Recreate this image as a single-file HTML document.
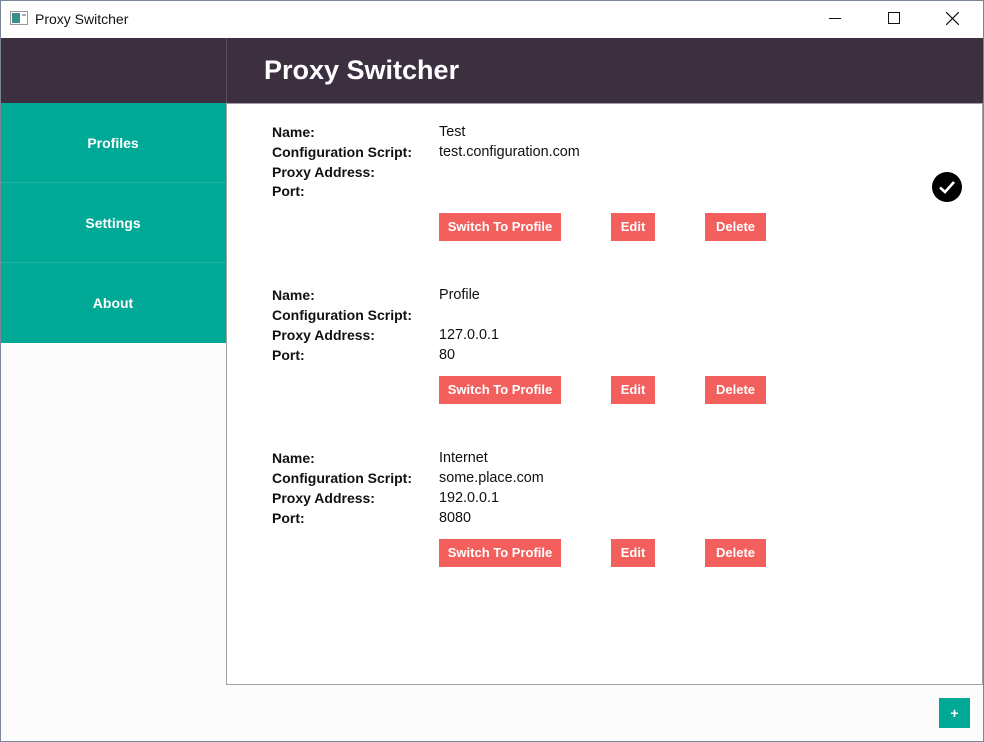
<!DOCTYPE html>
<html><head><style>
*{margin:0;padding:0;box-sizing:border-box}
body{width:984px;height:742px;position:relative;overflow:hidden;font-family:"Liberation Sans",sans-serif;background:#fcfcfc}
.abs{position:absolute}
.frame{left:0;top:0;width:984px;height:742px;border:1px solid #7a8599;z-index:10;pointer-events:none}
.title{left:0;top:0;width:984px;height:38px;background:#fff}
.hdr{left:0;top:38px;width:984px;height:65px;background:#3c2f40}
.side{left:0;top:103px;width:226px;height:240px;background:#00a896}
.item{position:absolute;left:0;width:226px;height:80px;line-height:80px;text-align:center;color:#fff;font-weight:bold;font-size:14px;border-bottom:1px solid #1fb3a3}
.panel{left:226px;top:103px;width:757px;height:582px;background:#fff;border:1px solid #a0a0a0}
.lbl{position:absolute;left:272px;font-size:14px;font-weight:bold;color:#111}
.val{position:absolute;left:439px;font-size:14.4px;color:#111}
.btn{position:absolute;height:28px;line-height:28px;background:#f25f5c;color:#fff;font-weight:bold;font-size:13px;text-align:center}
</style></head><body>
<div class="abs frame"></div>
<div class="abs title">
<svg class="abs" style="left:10px;top:11px" width="18" height="14"><rect x="0.5" y="0.5" width="17" height="13" fill="#fff" stroke="#999"/><rect x="2" y="2" width="8" height="10" fill="#3a8f8a"/><rect x="12" y="3" width="4" height="2" fill="#aaa"/></svg>
<div class="abs" style="left:35px;top:11px;font-size:14px;color:#111">Proxy Switcher</div>
<div class="abs" style="left:829px;top:18px;width:12px;height:1px;background:#111"></div>
<div class="abs" style="left:888px;top:12px;width:12px;height:12px;border:1px solid #111"></div>
<svg class="abs" style="left:946px;top:12px" width="13" height="13"><path d="M0 0L13 13M13 0L0 13" stroke="#111" stroke-width="1.2"/></svg>
</div>
<div class="abs hdr"><div class="abs" style="left:226px;top:0;width:1px;height:65px;background:#5a4d5e"></div>
<div class="abs" style="left:264px;top:17px;font-size:27px;font-weight:bold;color:#fff">Proxy Switcher</div></div>
<div class="abs side">
<div class="item" style="top:0">Profiles</div>
<div class="item" style="top:80px">Settings</div>
<div class="item" style="top:160px;border:none">About</div>
</div>
<div class="abs panel"></div>
<div class="lbl" style="top:124px">Name:</div><div class="val" style="top:124px">Test</div>
<div class="lbl" style="top:144px">Configuration Script:</div><div class="val" style="top:144px">test.configuration.com</div>
<div class="lbl" style="top:164px">Proxy Address:</div>
<div class="lbl" style="top:183px">Port:</div>
<div class="btn" style="left:439px;top:213px;width:122px">Switch To Profile</div>
<div class="btn" style="left:611px;top:213px;width:44px">Edit</div>
<div class="btn" style="left:705px;top:213px;width:61px">Delete</div>
<svg class="abs" style="left:932px;top:172px" width="30" height="30"><circle cx="15" cy="15" r="15" fill="#000"/><path d="M8 15.5L13 20L22 10" stroke="#fff" stroke-width="2.6" fill="none"/></svg>

<div class="lbl" style="top:287px">Name:</div><div class="val" style="top:287px">Profile</div>
<div class="lbl" style="top:307px">Configuration Script:</div>
<div class="lbl" style="top:327px">Proxy Address:</div><div class="val" style="top:327px">127.0.0.1</div>
<div class="lbl" style="top:347px">Port:</div><div class="val" style="top:347px">80</div>
<div class="btn" style="left:439px;top:376px;width:122px">Switch To Profile</div>
<div class="btn" style="left:611px;top:376px;width:44px">Edit</div>
<div class="btn" style="left:705px;top:376px;width:61px">Delete</div>

<div class="lbl" style="top:450px">Name:</div><div class="val" style="top:450px">Internet</div>
<div class="lbl" style="top:470px">Configuration Script:</div><div class="val" style="top:470px">some.place.com</div>
<div class="lbl" style="top:490px">Proxy Address:</div><div class="val" style="top:490px">192.0.0.1</div>
<div class="lbl" style="top:510px">Port:</div><div class="val" style="top:510px">8080</div>
<div class="btn" style="left:439px;top:539px;width:122px">Switch To Profile</div>
<div class="btn" style="left:611px;top:539px;width:44px">Edit</div>
<div class="btn" style="left:705px;top:539px;width:61px">Delete</div>

<div class="abs" style="left:939px;top:698px;width:31px;height:30px;background:#00a896;color:#fff;text-align:center;line-height:30px;font-size:14px;font-weight:bold">+</div>
</body></html>
